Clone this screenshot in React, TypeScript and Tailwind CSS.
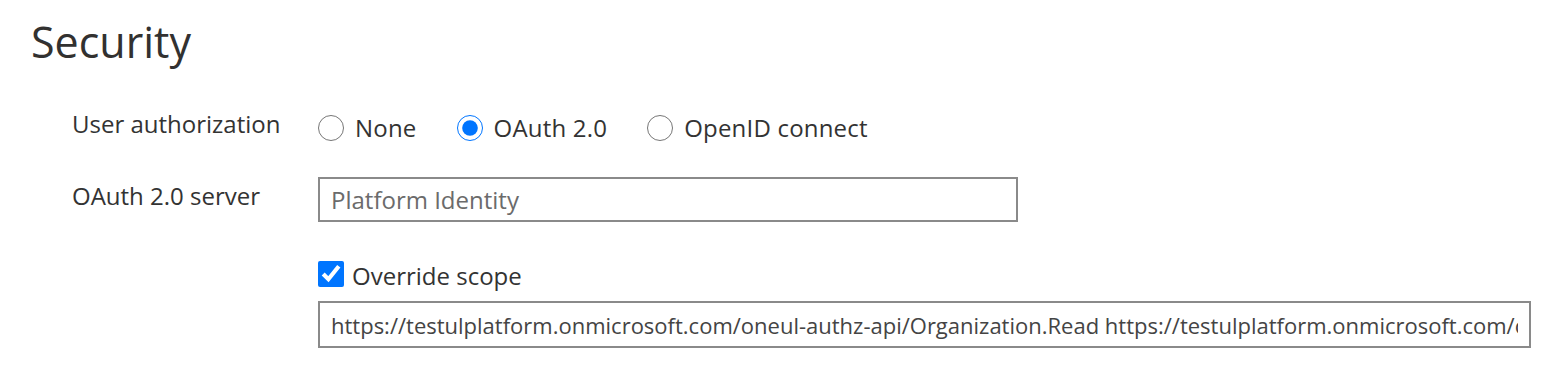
import { useState } from 'react'

const font = { fontFamily: '"Segoe UI", "Open Sans", "Noto Sans", sans-serif' }

export default function App() {
  const [auth, setAuth] = useState('oauth')
  const [override, setOverride] = useState(true)

  const options = [
    { id: 'none', label: 'None' },
    { id: 'oauth', label: 'OAuth 2.0' },
    { id: 'openid', label: 'OpenID connect' },
  ]

  return (
    <div className="w-[1559px] h-[376px] bg-white text-[#333333]" style={font}>
      {/* Section title */}
      <h1 className="pl-[31px] pt-[12px] text-[43px] leading-[60px] font-normal text-[#323130]">Security</h1>

      <div className="mt-[36px] flex flex-col">
        {/* User authorization */}
        <div className="flex items-center h-[40px]">
          <div className="w-[318px] shrink-0 pl-[72px] text-[24px] -mt-[8px] whitespace-nowrap">User authorization</div>
          <div className="flex items-center">
            {options.map((o) => (
              <label key={o.id} className="flex items-center mr-[40px] cursor-pointer">
                <input
                  type="radio"
                  name="auth"
                  checked={auth === o.id}
                  onChange={() => setAuth(o.id)}
                  className="m-0 w-[26px] h-[26px] accent-[#0075ff]"
                />
                <span className="ml-[11px] text-[24px] tracking-[0.2px]">{o.label}</span>
              </label>
            ))}
          </div>
        </div>

        {/* OAuth 2.0 server */}
        <div className="flex items-start mt-[29px]">
          <div className="w-[318px] shrink-0 pl-[72px] text-[24px] pt-[1px] whitespace-nowrap">OAuth 2.0 server</div>
          <input
            type="text"
            placeholder="Platform Identity"
            className="w-[700px] h-[45px] border-2 border-[#8a8a8a] px-[11px] text-[24px] text-[#444] placeholder:text-[#6b6b6b] outline-none"
          />
        </div>

        {/* Override scope */}
        <div className="ml-[318px] mt-[38px] flex flex-col">
          <label className="flex items-center h-[28px] cursor-pointer">
            <input
              type="checkbox"
              checked={override}
              onChange={() => setOverride(!override)}
              className="m-0 w-[26px] h-[26px] accent-[#0075ff]"
            />
            <span className="ml-[8px] mt-[4px] text-[24px]">Override scope</span>
          </label>
          <input
            type="text"
            defaultValue="https://testulplatform.onmicrosoft.com/oneul-authz-api/Organization.Read https://testulplatform.onmicrosoft.com/oneul-authz-api/Organization.Write"
            className="mt-[13px] w-[1213px] h-[47px] border-2 border-[#8a8a8a] px-[11px] text-[22px] text-[#444] outline-none"
          />
        </div>
      </div>
    </div>
  )
}
